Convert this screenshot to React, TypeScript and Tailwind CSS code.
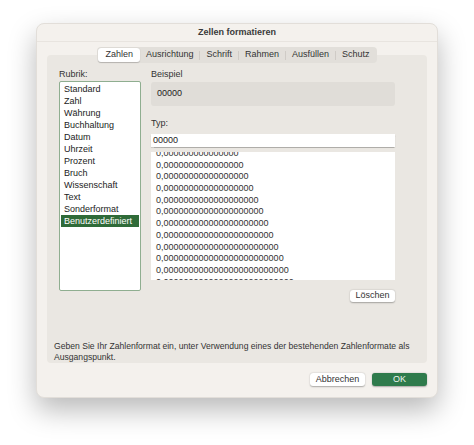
import React from "react";

const categories = [
  "Standard",
  "Zahl",
  "Währung",
  "Buchhaltung",
  "Datum",
  "Uhrzeit",
  "Prozent",
  "Bruch",
  "Wissenschaft",
  "Text",
  "Sonderformat",
  "Benutzerdefiniert",
];

const tabs = ["Zahlen", "Ausrichtung", "Schrift", "Rahmen", "Ausfüllen", "Schutz"];

// formats 0,000... with 15 to 27 zeros
const formats = Array.from({ length: 13 }, (_, i) => "0," + "0".repeat(15 + i));

export default function App() {
  return (
    <div
      className="w-[474px] h-[445px] bg-white pt-[23px] pl-[36px]"
      style={{ fontFamily: '"Liberation Sans", Arial, sans-serif' }}
    >
      <div className="w-[402px] h-[375px] rounded-[8px] bg-[#f4f1ed] border border-[#e2ded9] shadow-[0_12px_28px_rgba(0,0,0,0.28)] flex flex-col">
        {/* title bar */}
        <div className="h-[18px] flex items-center justify-center border-b border-[#e8e4df] text-[9px] font-bold text-[#3a3a3a]">
          Zellen formatieren
        </div>

        <div className="px-[10px] pt-[5px]">
          {/* tabs */}
          <div className="flex justify-center relative z-10">
            <div className="flex items-center h-[16px] bg-[#e2dfda] rounded-[4px] p-[1px] text-[9px] text-[#333]">
              {tabs.map((t, i) => (
                <React.Fragment key={t}>
                  {i > 1 && <div className="w-px h-[9px] bg-[#cfcbc6]" />}
                  <div
                    className={
                      i === 0
                        ? "h-[14px] px-[7px] flex items-center bg-white rounded-[3px] shadow-[0_0.5px_1px_rgba(0,0,0,0.2)]"
                        : "h-[14px] px-[6px] flex items-center"
                    }
                  >
                    {t}
                  </div>
                </React.Fragment>
              ))}
            </div>
          </div>

          {/* panel */}
          <div className="-mt-[8px] h-[308px] bg-[#eae7e2] rounded-[4px] pt-[13px] pl-[12px] pr-[32px] flex flex-col">
            <div className="flex gap-[10px]">
              {/* left column */}
              <div className="w-[82px] flex flex-col">
                <div className="h-[13px] text-[9px] text-[#333] leading-[13px]">Rubrik:</div>
                <div className="h-[210px] bg-white border-[1.5px] border-[#8fae90] rounded-[2px] pt-[1px] px-[1px] text-[9px] text-[#222]">
                  {categories.map((c) => (
                    <div
                      key={c}
                      className={
                        c === "Benutzerdefiniert"
                          ? "h-[12px] leading-[12px] px-[3px] bg-[#2f6b39] text-white"
                          : "h-[12px] leading-[12px] px-[3px]"
                      }
                    >
                      {c}
                    </div>
                  ))}
                </div>
              </div>

              {/* right column */}
              <div className="flex-1 flex flex-col">
                <div className="h-[13px] text-[9px] text-[#333] leading-[13px]">Beispiel</div>
                <div className="mt-[1px] h-[24px] bg-[#e0ddd8] rounded-[3px] flex items-center px-[6px] text-[9px] text-[#222]">
                  00000
                </div>
                <div className="mt-[11px] h-[13px] text-[9px] text-[#333] leading-[13px]">Typ:</div>
                <div className="mt-[4px] h-[13px] bg-white shadow-[0_0.5px_1px_rgba(0,0,0,0.25)] flex items-center px-[2px] text-[9px] text-[#222]">
                  00000
                </div>
                <div className="mt-[5px] h-[128px] bg-white overflow-hidden text-[9px] text-[#333] px-[5px]">
                  <div className="-mt-[4px]">
                    {formats.map((f) => (
                      <div key={f} className="h-[11.7px] leading-[11.7px]">
                        {f}
                      </div>
                    ))}
                  </div>
                </div>
                <div className="mt-[10px] flex justify-end">
                  <div className="h-[12px] w-[45px] bg-white rounded-[3px] shadow-[0_0.5px_1.5px_rgba(0,0,0,0.3)] flex items-center justify-center text-[9px] text-[#333]">
                    Löschen
                  </div>
                </div>
              </div>
            </div>

            <div className="mt-auto mb-0 -mr-[26px] -ml-[5px] text-[8.6px] leading-[11px] text-[#333]">
              Geben Sie Ihr Zahlenformat ein, unter Verwendung eines der bestehenden Zahlenformate als
              Ausgangspunkt.
            </div>
          </div>

          {/* footer buttons */}
          <div className="mt-[10px] flex justify-end gap-[7px]">
            <div className="h-[13px] w-[55px] bg-white rounded-[3px] shadow-[0_0.5px_1.5px_rgba(0,0,0,0.3)] flex items-center justify-center text-[9px] text-[#333]">
              Abbrechen
            </div>
            <div className="h-[13px] w-[55px] bg-[#2f7b4c] rounded-[3px] shadow-[0_0.5px_1.5px_rgba(0,0,0,0.3)] flex items-center justify-center text-[9px] text-[#eef7ef]">
              OK
            </div>
          </div>
        </div>
      </div>
    </div>
  );
}
